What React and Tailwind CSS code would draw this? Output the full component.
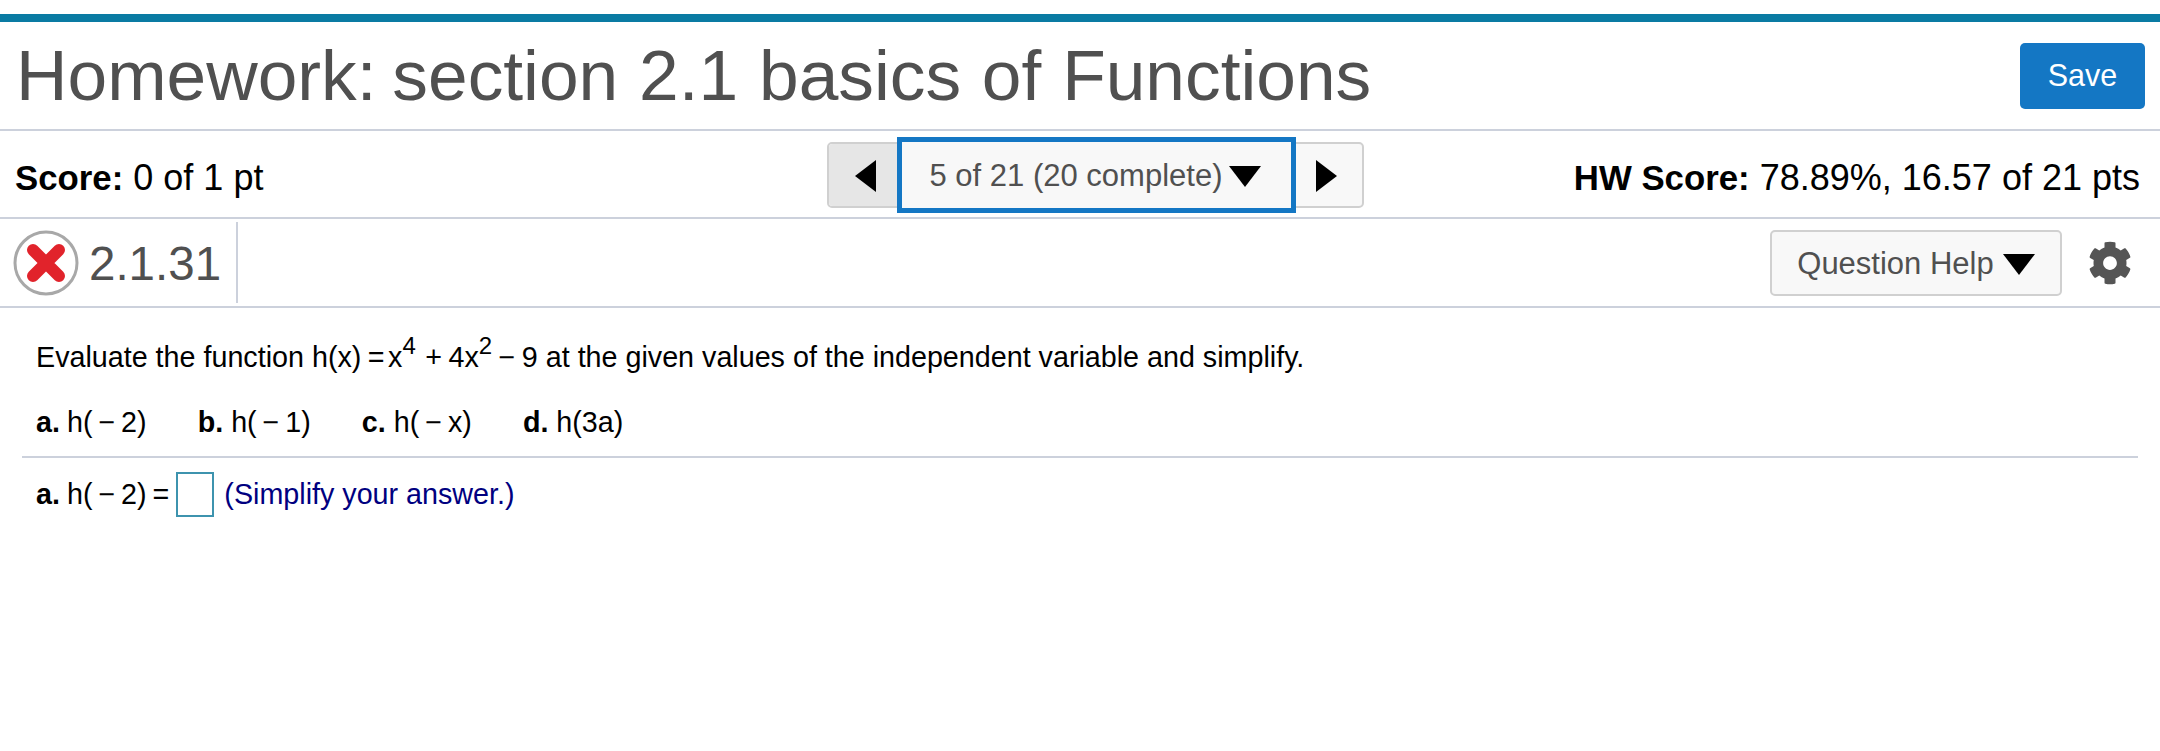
import { FaCog } from 'react-icons/fa'

// small filled triangle used by the dropdown and pager buttons
function Caret({ dir = 'down', className = '' }) {
  const points = {
    down: '0,0 32,0 16,21',
    left: '21,0 21,32 0,16',
    right: '0,0 21,16 0,32',
  }
  const box = dir === 'down' ? '0 0 32 21' : '0 0 21 32'
  return (
    <svg viewBox={box} className={className}>
      <polygon points={points[dir]} fill="#000" />
    </svg>
  )
}

function WrongIcon() {
  return (
    <svg viewBox="0 0 66 66" className="w-[66px] h-[66px] shrink-0">
      <circle cx="33" cy="33" r="31" fill="#fff" stroke="#a8a8a8" strokeWidth="3" />
      <path d="M20 20 L46 46 M46 20 L20 46" stroke="#e1232b" strokeWidth="12" strokeLinecap="round" />
    </svg>
  )
}

function App() {
  return (
    <div className="w-[2160px] h-[751px] bg-white overflow-hidden font-['Liberation_Sans',Arial,sans-serif] text-black">
      <div className="mt-[14px] h-[8px] bg-[#0a7ba3]" />

      {/* Title */}
      <div className="h-[109px] flex items-center justify-between pl-[16px] pr-[15px] border-b-2 border-[#ccd1dc]">
        <h1 className="text-[71.3px] leading-none text-[#505050] [word-spacing:1px]">
          <span className="[word-spacing:-4px]">Homework: </span>section 2.1 basics of Functions
        </h1>
        <button className="w-[125px] h-[66px] rounded-[5px] bg-[#1477c4] text-white text-[30.5px]">Save</button>
      </div>

      {/* Score row */}
      <div className="relative h-[88px] flex items-center justify-between pl-[15px] pr-[20px] pt-[7px] border-b-2 border-[#ccd1dc] text-[36px]">
        <div><span className="font-bold text-[34.8px]">Score:</span> 0 of 1 pt</div>
        <div className="absolute left-[827px] top-[11px] flex items-center w-[537px] h-[66px] rounded-[5px] border-2 border-[#d0d0d0] bg-[#f8f8f8]">
          <div className="w-[70px] h-full pt-[2px] pl-[2px] bg-[#e6e6e6] rounded-l-[4px] flex items-center justify-center">
            <Caret dir="left" className="w-[21px] h-[32px]" />
          </div>
          <div className="absolute left-[68px] top-[-7px] w-[399px] h-[76px] pt-[2px] pr-[2px] border-[5px] border-[#1477c4] bg-[#f8f8f8] flex items-center justify-center gap-[7px] text-[#505050] text-[31px]">
            5 of 21 (20 complete)
            <Caret dir="down" className="w-[32px] h-[21px]" />
          </div>
          <div className="ml-auto w-[69px] pt-[2px] pr-[2px] flex items-center justify-center">
            <Caret dir="right" className="w-[21px] h-[32px]" />
          </div>
        </div>
        <div><span className="font-bold text-[34.8px]">HW Score:</span> 78.89%, 16.57 of 21 pts</div>
      </div>

      {/* Question id row */}
      <div className="h-[89px] flex items-center justify-between pl-[13px] pr-[28px] border-b-2 border-[#ccd1dc]">
        <div className="flex items-center h-full py-[3px]">
          <WrongIcon />
          <span className="ml-[10px] pr-[15px] pt-[2px] h-full flex items-center border-r-2 border-[#ccd1dc] text-[47.5px] text-[#505050]">2.1.31</span>
        </div>
        <div className="flex items-center gap-[26px]">
          <button className="w-[292px] h-[66px] pt-[4px] rounded-[5px] border-2 border-[#d0d0d0] bg-[#f8f8f8] flex items-center justify-center gap-[9px] text-[31px] text-[#505050]">
            Question Help
            <Caret dir="down" className="w-[32px] h-[21px]" />
          </button>
          <FaCog className="w-[44px] h-[44px] text-[#555]" />
        </div>
      </div>

      {/* Question body */}
      <div className="pl-[22px] pr-[22px] text-[28.7px]">
        <div className="pl-[14px] pt-[28px] h-[83px] whitespace-pre">
          Evaluate the function <span className="[word-spacing:-1.5px]">h(x) = <span className="-ml-[3px]">x</span><sup className="text-[24px] relative -top-[13px] align-baseline leading-none">4</sup><span className="ml-[3px]"> </span>+ 4x<sup className="text-[24px] relative -top-[13px] align-baseline leading-none">2</sup> − 9</span> at the given values of the independent variable and simplify.
        </div>
        <div className="pl-[14px] pt-[10px] flex gap-[51px] h-[65px]">
          <span><b>a.</b> <span className="-ml-[1px] [word-spacing:-2px]">h( − 2)</span></span>
          <span><b>b.</b> <span className="[word-spacing:-2px]">h( − 1)</span></span>
          <span><b>c.</b> <span className="[word-spacing:-2px]">h( − x)</span></span>
          <span><b>d.</b> h(3a)</span>
        </div>
        <div className="pl-[14px] pt-[14px] border-t-2 border-[#ccd1dc] flex items-center">
          <span><b>a.</b> <span className="-ml-[1px] [word-spacing:-2px]">h( − 2) =</span></span>
          <span className="ml-[7px] w-[38px] h-[45px] border-2 border-[#3d93ae] bg-white" />
          <span className="ml-[10px] text-[#000080]">(Simplify your answer.)</span>
        </div>
      </div>
    </div>
  )
}

export default App
